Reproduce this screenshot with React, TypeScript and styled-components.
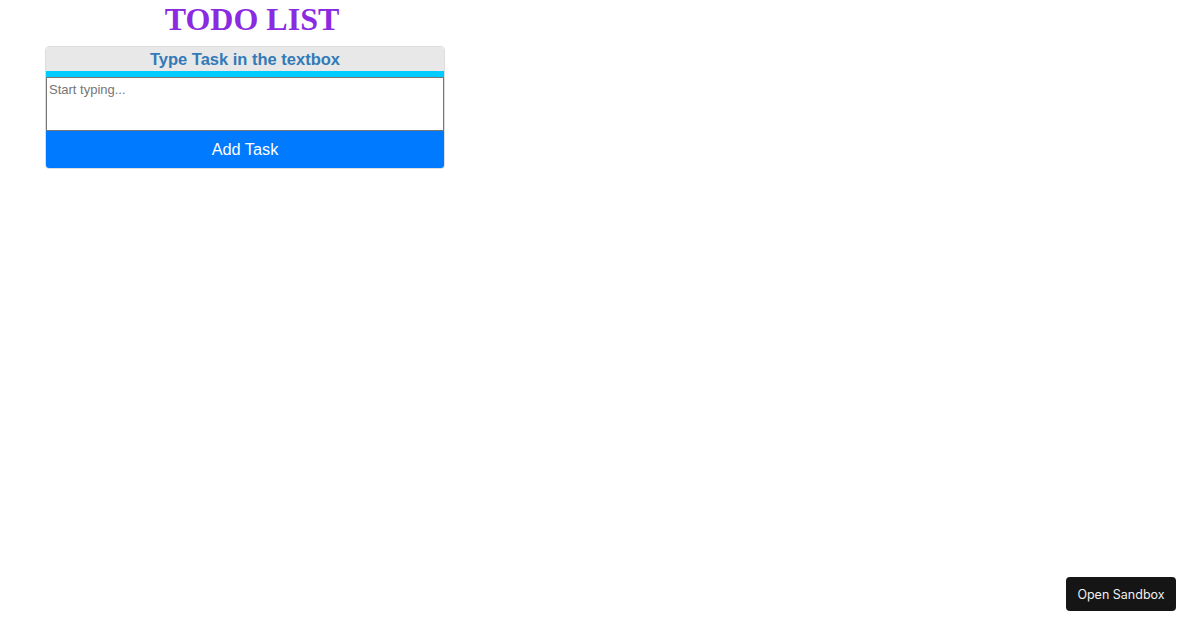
import React from "react";
import styled, { createGlobalStyle } from "styled-components";

const GlobalStyle = createGlobalStyle`
  html, body { margin: 0; padding: 0; background: #ffffff; }
  body { font-family: "Liberation Sans", Arial, sans-serif; }
  * { box-sizing: border-box; }
`;

const Page = styled.div`
  padding-left: 45px;
  width: 100%;
  min-height: 630px;
`;

const Column = styled.div`
  width: 400px;
  display: flex;
  flex-direction: column;
`;

const Title = styled.h1`
  margin: 0;
  padding-left: 14px;
  height: 38px;
  text-align: center;
  font-family: "Liberation Serif", "Times New Roman", serif;
  font-weight: bold;
  font-size: 32px;
  line-height: 38px;
  color: #8a2be2;
`;

const Card = styled.div`
  margin-top: 8px;
  display: flex;
  flex-direction: column;
  border: 1px solid #dddddd;
  border-radius: 4px;
  overflow: hidden;
`;

const CardHeader = styled.div`
  height: 24px;
  background: #e8e8e8;
  color: #337ab7;
  font-weight: bold;
  font-size: 16.5px;
  line-height: 24px;
  text-align: center;
`;

const AccentBar = styled.div`
  height: 6px;
  background: #00ccff;
`;

const TaskInput = styled.textarea`
  display: block;
  width: 100%;
  height: 54px;
  margin: 0;
  padding: 4px 2px 2px;
  border: 1px solid #767676;
  border-radius: 0;
  resize: none;
  font-family: "Liberation Sans", Arial, sans-serif;
  font-size: 13px;
  color: #222;
  &::placeholder { color: #757575; }
`;

const AddButton = styled.button`
  height: 37px;
  border: none;
  margin: 0;
  background: #007bff;
  color: #ffffff;
  font-family: "Liberation Sans", Arial, sans-serif;
  font-size: 16.3px;
  cursor: pointer;
`;

const SandboxButton = styled.button`
  position: fixed;
  right: 24px;
  bottom: 19px;
  width: 110px;
  height: 34px;
  border: none;
  border-radius: 4px;
  background: #151515;
  color: #f0f0f0;
  font-family: Inter, "Liberation Sans", sans-serif;
  font-size: 12.5px;
  cursor: pointer;
`;

export default function App() {
  return (
    <>
      <GlobalStyle />
      <Page>
        <Column>
          <Title>TODO LIST</Title>
          <Card>
            <CardHeader>Type Task in the textbox</CardHeader>
            <AccentBar />
            <TaskInput placeholder="Start typing..." />
            <AddButton>Add Task</AddButton>
          </Card>
        </Column>
      </Page>
      <SandboxButton>Open Sandbox</SandboxButton>
    </>
  );
}
